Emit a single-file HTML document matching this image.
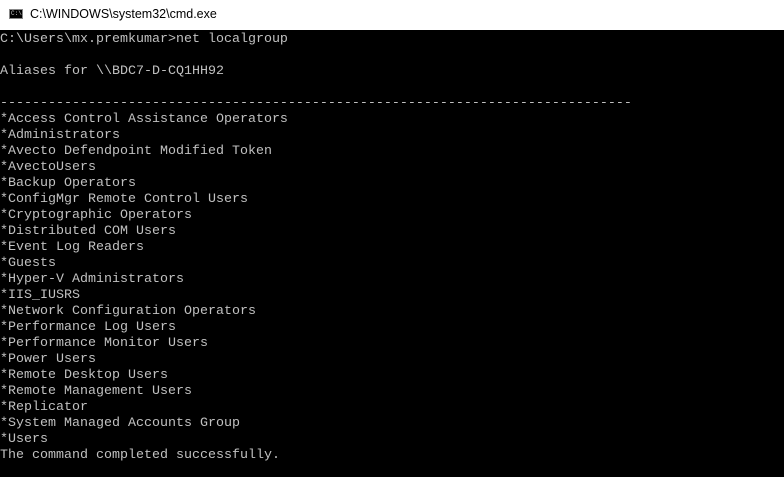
<!DOCTYPE html>
<html><head><style>
html,body{margin:0;padding:0;width:784px;height:477px;overflow:hidden;background:#000}
.title{position:absolute;left:0;top:0;width:784px;height:30px;background:#fff}
.icon{position:absolute;left:9px;top:9px;width:14px;height:10px;background:#000;border:1px solid #888;box-sizing:border-box}
.icon span{position:absolute;left:1px;top:1px;font:6px "Liberation Mono",monospace;color:#ccc;line-height:6px}
.ttext{position:absolute;left:30px;top:7px;font:12.5px "Liberation Sans",sans-serif;color:#000}
pre{position:absolute;left:0;top:32px;margin:0;font:13.33px/16px "Liberation Mono",monospace;color:#c0c0c0}
</style></head><body>
<div class="title"><div class="icon"><span>C:\</span></div><div class="ttext">C:\WINDOWS\system32\cmd.exe</div></div>
<pre>C:\Users\mx.premkumar&gt;net localgroup

Aliases for \\BDC7-D-CQ1HH92

-------------------------------------------------------------------------------
*Access Control Assistance Operators
*Administrators
*Avecto Defendpoint Modified Token
*AvectoUsers
*Backup Operators
*ConfigMgr Remote Control Users
*Cryptographic Operators
*Distributed COM Users
*Event Log Readers
*Guests
*Hyper-V Administrators
*IIS_IUSRS
*Network Configuration Operators
*Performance Log Users
*Performance Monitor Users
*Power Users
*Remote Desktop Users
*Remote Management Users
*Replicator
*System Managed Accounts Group
*Users
The command completed successfully.</pre>
</body></html>
